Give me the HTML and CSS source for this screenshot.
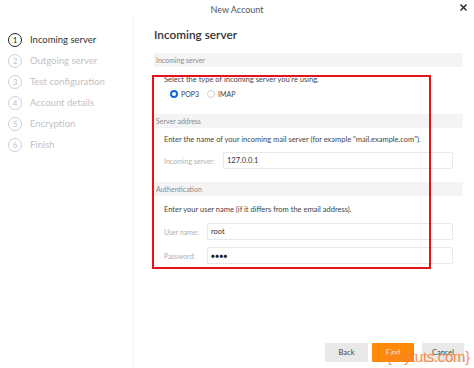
FILE: index.html
```html
<!DOCTYPE html>
<html>
<head>
  <title>New Account</title>
  <link rel="stylesheet" href="styles.css">
</head>
<body>
  <div class="window">
    <div class="titlebar">
      <span></span>
      <span class="title">New Account</span>
      <span class="close">
        <svg width="7" height="7" viewBox="0 0 7 7"><path d="M0.5 0.5L6.5 6.5M6.5 0.5L0.5 6.5" stroke="#222" stroke-width="1.4"/></svg>
      </span>
    </div>

    <div class="main">
      <div class="sidebar">
        <div class="step active"><span class="num">1</span>Incoming server</div>
        <div class="step"><span class="num">2</span>Outgoing server</div>
        <div class="step"><span class="num">3</span>Test configuration</div>
        <div class="step"><span class="num">4</span>Account details</div>
        <div class="step"><span class="num">5</span>Encryption</div>
        <div class="step"><span class="num">6</span>Finish</div>
      </div>

      <div class="content">
        <h1>Incoming server</h1>

        <div class="section-title">Incoming server</div>
        <div class="section-body">
          <p class="hint first">Select the type of incoming server you're using.</p>
          <div class="radios">
            <span class="radio checked"></span><span class="radio-label">POP3</span>
            <span class="radio"></span><span class="radio-label">IMAP</span>
          </div>
        </div>

        <div class="section-title gap-lg">Server address</div>
        <div class="section-body">
          <p class="hint">Enter the name of your incoming mail server (for example "mail.example.com").</p>
          <div class="field">
            <label class="label wide">Incoming server:</label>
            <div class="input">127.0.0.1</div>
          </div>
        </div>

        <div class="section-title gap-md">Authentication</div>
        <div class="section-body">
          <p class="hint second">Enter your user name (if it differs from the email address).</p>
          <div class="field">
            <label class="label narrow">User name:</label>
            <div class="input">root</div>
          </div>
          <div class="field">
            <label class="label narrow">Password:</label>
            <div class="input dots">&#9679;&#9679;&#9679;&#9679;</div>
          </div>
        </div>

        <div class="buttons">
          <button class="btn">Back</button>
          <button class="btn primary">Find</button>
          <button class="btn cancel">Cancel</button>
        </div>

        <!-- annotation drawn on the screenshot -->
        <div class="highlight"></div>
      </div>
    </div>

    <div class="watermark">{mytuts.com}</div>
  </div>
</body>
</html>
```

FILE: styles.css
```css
body {
  margin: 0;
  font-family: Lato, "Open Sans", sans-serif;
  background: #fff;
  color: #333;
}

.window {
  position: relative;
  width: 474px;
  height: 368px;
  display: flex;
  flex-direction: column;
  overflow: hidden;
}

.titlebar {
  height: 18px;
  display: grid;
  grid-template-columns: 1fr auto 1fr;
  align-items: center;
}

.title {
  font-size: 9px;
  color: #555;
  padding-top: 1px;
}

.close {
  justify-self: end;
  padding-right: 7px;
  display: flex;
  padding-bottom: 4px;
}

.main {
  flex: 1;
  display: flex;
}

.sidebar {
  width: 134px;
  box-sizing: border-box;
  border-right: 1px solid #f4f4f4;
  padding: 11px 0 0 8px;
}

.step {
  display: flex;
  align-items: center;
  height: 21px;
  font-size: 9.5px;
  color: #c2c2c2;
}

.step .num {
  width: 14px;
  height: 14px;
  box-sizing: border-box;
  border: 1.2px solid #d0d0d0;
  border-radius: 50%;
  display: flex;
  align-items: center;
  justify-content: center;
  font-size: 8px;
  margin-right: 8px;
}

.step.active {
  color: #333;
}

.step.active .num {
  border: 1.5px solid #222;
  color: #222;
}

.content {
  position: relative;
  flex: 1;
  display: flex;
  flex-direction: column;
  padding: 0 11px 6px 20px;
}

h1 {
  font-size: 11.8px;
  font-weight: 600;
  line-height: 16px;
  margin: 9px 0 0 0;
  color: #333;
}

.section-title {
  height: 14px;
  line-height: 14px;
  margin-top: 10px;
  padding-left: 2px;
  background: #f4f4f4;
  font-size: 7px;
  color: #8a8a8a;
}

.section-title.gap-lg {
  margin-top: 14px;
}

.section-title.gap-md {
  margin-top: 13px;
}

.section-body {
  padding: 0 10px 0 10px;
}

.hint {
  margin: 6px 0 0 0;
  line-height: 12px;
  font-size: 7.5px;
  color: #444;
}

.hint.first {
  margin-top: 7px;
}

.hint.second {
  margin-top: 8px;
}

.radios {
  display: flex;
  align-items: center;
  height: 12px;
  margin-top: 2px;
  padding-left: 6px;
  font-size: 7px;
  color: #444;
}

.radio {
  width: 8px;
  height: 8px;
  box-sizing: border-box;
  border: 1px solid #cfcfcf;
  border-radius: 50%;
  margin-right: 3px;
}

.radio.checked {
  border: 2.5px solid #1565d8;
}

.radio-label {
  margin-right: 8px;
}

.field {
  display: flex;
  align-items: center;
  margin-top: 6px;
}

.field + .field {
  margin-top: 7px;
}

.section-body .hint.second + .field {
  margin-top: 7px;
}

.label {
  font-size: 7px;
  color: #b0b0b0;
}

.label.wide {
  width: 59px;
}

.label.narrow {
  width: 43px;
}

.input {
  flex: 1;
  height: 17px;
  line-height: 15px;
  box-sizing: border-box;
  border: 1px solid #e8e8e8;
  border-radius: 2px;
  padding-left: 3px;
  font-size: 7.5px;
  color: #333;
}

.input.dots {
  font-size: 6.5px;
  letter-spacing: 0.3px;
  color: #222;
}

.buttons {
  margin-top: auto;
  display: flex;
  justify-content: flex-end;
  margin-right: -1px;
}

.btn {
  width: 43px;
  height: 19px;
  border: none;
  border-radius: 1px;
  background: #e9e9e9;
  font-family: Lato, "Open Sans", sans-serif;
  font-size: 7.5px;
  color: #444;
  padding: 0;
}

.btn.primary {
  width: 42px;
  margin-left: 4px;
  background: #ff8a0a;
  color: #ffe1c2;
}

.btn.cancel {
  width: 42px;
  margin-left: 8px;
}

.highlight {
  position: absolute;
  left: 18px;
  top: 57px;
  width: 279px;
  height: 194px;
  box-sizing: border-box;
  border: 2px solid #e3121b;
}

.watermark {
  position: absolute;
  right: 4px;
  bottom: 3px;
  font-family: "Liberation Sans", Arial, sans-serif;
  font-size: 15px;
  color: rgba(245, 128, 50, 0.9);
  letter-spacing: -0.3px;
}
```
